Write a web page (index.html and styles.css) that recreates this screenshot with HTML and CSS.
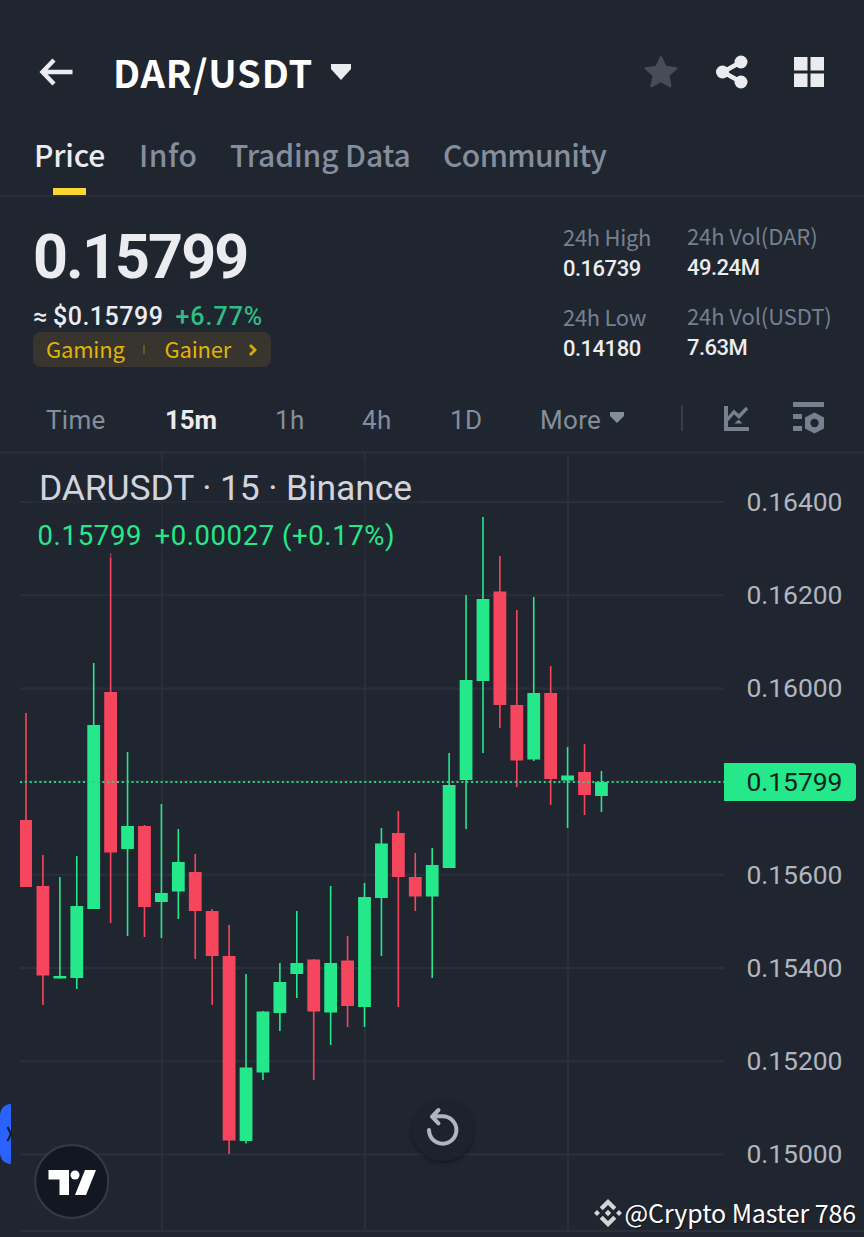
FILE: index.html
```html
<!DOCTYPE html>
<html lang="en">
<head>
    <meta charset="UTF-8">
    <meta name="viewport" content="width=device-width, initial-scale=1.0">
    <title>DAR/USDT</title>
    <link rel="stylesheet" href="styles.css">
</head>
<body>

    <header class="topbar">
        <svg class="back" width="34" height="28" viewBox="0 0 34 28">
            <path d="M33.500 14H4M15 2L3.500 14 15 26" fill="none" stroke="#eaecef" stroke-width="4.400"/>
        </svg>
        <h1>DAR/USDT</h1>
        <svg class="caret" width="22" height="16" viewBox="0 0 22 16">
            <path d="M1 0h20v5L11 16 1 5z" fill="#eaecef"/>
        </svg>
        <div class="actions">
            <svg width="34" height="34" viewBox="0 0 34 34">
                <path d="M17 2l4.600 9.800 10.800 1.400-7.900 7.400 2 10.700L17 26.200l-9.500 5.100 2-10.700-7.900-7.400 10.800-1.400z" fill="#474d57" stroke="#474d57" stroke-width="2" stroke-linejoin="round"/>
            </svg>
            <svg width="32" height="34" viewBox="0 0 32 34">
                <path d="M25 7L7 17l18 10" fill="none" stroke="#eaecef" stroke-width="4.600"/>
                <circle cx="25" cy="7" r="6.500" fill="#eaecef"/>
                <circle cx="6.500" cy="17" r="6.500" fill="#eaecef"/>
                <circle cx="25" cy="27" r="6.500" fill="#eaecef"/>
            </svg>
            <svg width="30" height="30" viewBox="0 0 30 30">
                <path d="M0 0h13.500v13.500H0zM16.500 0H30v13.500H16.500zM0 16.500h13.500V30H0zM16.500 16.500H30V30H16.500z" fill="#eaecef"/>
            </svg>
        </div>
    </header>

    <nav class="tabs">
        <a class="tab tab-price active">Price</a>
        <a class="tab tab-info">Info</a>
        <a class="tab tab-trading">Trading Data</a>
        <a class="tab tab-community">Community</a>
    </nav>

    <section class="summary">
        <div class="price">
            <div class="last">0.15799</div>
            <div class="fiat"><span class="approx">≈</span><span>$0.15799</span><span class="change">+6.77%</span></div>
            <div class="tags">
                <span>Gaming</span>
                <i class="tag-sep"></i>
                <span>Gainer</span>
                <svg width="10" height="14" viewBox="0 0 10 14">
                    <path d="M2 2l5 5-5 5" fill="none" stroke="#d9a90b" stroke-width="2.800"/>
                </svg>
            </div>
        </div>
        <div class="stats stats-range">
            <div class="label">24h High</div>
            <div class="value">0.16739</div>
            <div class="label">24h Low</div>
            <div class="value">0.14180</div>
        </div>
        <div class="stats stats-vol">
            <div class="label">24h Vol(DAR)</div>
            <div class="value">49.24M</div>
            <div class="label">24h Vol(USDT)</div>
            <div class="value">7.63M</div>
        </div>
    </section>

    <div class="intervals">
        <span class="int-time">Time</span>
        <span class="int-15m active">15m</span>
        <span class="int-1h">1h</span>
        <span class="int-4h">4h</span>
        <span class="int-1d">1D</span>
        <span class="int-more">More
            <svg width="14" height="11" viewBox="0 0 14 11"><path d="M0 0h14v4L7 11 0 4z" fill="#848e9c"/></svg>
        </span>
        <i class="divider"></i>
        <svg class="draw" width="25" height="25" viewBox="0 0 25 25">
            <path d="M2 0v23h23" fill="none" stroke="#76808f" stroke-width="4"/>
            <path d="M3 14l7-8 5 4.500 8-8.500" fill="none" stroke="#76808f" stroke-width="3.400"/>
            <path d="M10.500 17.500l4-4 4 4z" fill="#76808f"/>
        </svg>
        <svg class="settings" width="31" height="32" viewBox="0 0 31 32">
            <path d="M0 0h31v5H0zM0 12h9v5H0zM0 24h9v5H0z" fill="#76808f"/>
            <path fill-rule="evenodd" d="M21.500 10.500l9.500 5v11l-9.500 5-9.500-5v-11zM21.500 16.800a4.200 4.200 0 1 0 0 8.400 4.200 4.200 0 1 0 0-8.400z" fill="#76808f"/>
        </svg>
    </div>

    <main class="chart">
        <svg class="plot" width="864" height="783" viewBox="0 454 864 783">
            <g id="grid"></g>
            <g id="candles"></g>
            <path class="last-line" d="M20 782H724"/>
            <g id="axis"></g>
            <path class="last-tag" d="M724 763h128a4 4 0 0 1 4 4v30a4 4 0 0 1-4 4H724z"/>
            <text class="axis-text last-text" x="746.500" y="791" textLength="96">0.15799</text>
            <rect class="legend-bg" x="30" y="460" width="390" height="98"/>
            <text class="symbol" x="39" y="499.500" textLength="373">DARUSDT · 15 · Binance</text>
            <text class="ohlc" x="37.500" y="545" textLength="104">0.15799</text>
            <text class="ohlc" x="154.500" y="545" textLength="240">+0.00027 (+0.17%)</text>

            <!-- drawer handle -->
            <path d="M11 1104v60C4 1164 0 1159 0 1152v-36c0-7 4-12 11-12z" fill="#2962ff"/>
            <path d="M7.500 1127l3.500 7-3.500 7" fill="none" stroke="#131722" stroke-width="2"/>

            <!-- TradingView badge -->
            <circle cx="71.700" cy="1181.500" r="36.500" fill="#131722" stroke="#363a45" stroke-width="2"/>
            <path d="M48.500 1170H69v25h-9.500v-15.500h-11zM85 1170h11l-10 25H75z" fill="#fff"/>
            <circle cx="75" cy="1175" r="4.500" fill="#fff"/>

            <!-- reset button -->
            <circle class="reset" cx="443" cy="1130" r="31"/>
            <path d="M429 1130a13.700 13.700 0 1 0 13.700-13.700h-9M438.500 1110l-6.500 6.700 6.500 6.700" fill="none" stroke="#b2b5be" stroke-width="4" stroke-linecap="round" stroke-linejoin="round"/>
        </svg>
        <div class="watermark">
            <svg width="28" height="28" viewBox="0 0 28 28">
                <path d="M14 0l8.300 8.300-3 3L14 6l-5.300 5.300-3-3zM14 28l8.300-8.300-3-3L14 22l-5.300-5.300-3 3zM3 11l3 3-3 3-3-3zM25 11l3 3-3 3-3-3zM14 10.800l3.200 3.200-3.200 3.200-3.200-3.200z" fill="#d5d5d5"/>
            </svg>
            <span>@Crypto Master 786</span>
        </div>
    </main>

    <script>
        // direction, high, body top, body bottom, low
        const candles = [
            ["r", 713, 820, 887, 887], ["r", 855, 886, 975.5, 1005], ["g", 877, 976, 978.5, 978.5],
            ["g", 856, 906, 978, 989], ["g", 663, 725, 909, 909], ["r", 553, 692, 852.5, 923],
            ["g", 752, 826, 849, 936], ["r", 825, 826, 907, 937], ["g", 804, 893, 902, 938],
            ["g", 829, 862, 891.5, 919], ["r", 854, 872, 911, 959], ["r", 909, 911, 956, 1005],
            ["r", 925, 956, 1140.5, 1154], ["g", 974, 1067.5, 1141, 1143.5], ["g", 1011, 1011.5, 1072.5, 1080],
            ["g", 963, 982, 1013, 1031], ["g", 911, 963, 974, 998], ["r", 959, 959.5, 1011.5, 1080],
            ["g", 886, 963, 1012.5, 1045], ["r", 936, 960.5, 1006, 1027], ["g", 883, 897, 1007, 1027],
            ["g", 828, 843.5, 898, 956], ["r", 811, 833, 877, 1007], ["r", 853, 877, 896.5, 911],
            ["g", 848, 865, 896.5, 978], ["g", 753, 785, 868, 868], ["g", 595, 680, 780, 829],
            ["g", 517, 599, 681, 753], ["r", 556, 591.5, 705, 728], ["r", 610, 705, 760.5, 787],
            ["g", 597, 693, 759.5, 761], ["r", 666, 693, 779, 805], ["g", 747, 775.5, 780.5, 828],
            ["r", 744, 772, 795, 815], ["g", 771, 782, 796, 812]
        ];

        let bars = "";
        candles.forEach(([dir, high, top, bottom, low], i) => {
            const x = 26 + i * 16.925;
            const left = i === 0 ? 20 : x - 6.4;
            const width = i === 0 ? 12 : 12.8;
            bars += `<g class="${dir}"><rect x="${x - 0.8}" y="${high}" width="1.6" height="${low - high}"/>` +
                `<rect x="${left}" y="${top}" width="${width}" height="${bottom - top}"/></g>`;
        });
        document.getElementById("candles").innerHTML = bars;

        let lines = "";
        let labels = "";
        for (let i = 0; i < 8; i++) {
            const y = 502 + i * 93.2;
            lines += `<path d="M20 ${y}H724"/>`;
            if (i !== 3) {
                labels += `<text class="axis-text" x="746.5" y="${y + 9}" textLength="96">${(0.164 - i * 0.002).toFixed(5)}</text>`;
            }
        }
        [162, 365, 568].forEach(x => lines += `<path d="M${x} 454V1230"/>`);
        lines += `<path d="M20 1231H864"/>`;
        document.getElementById("grid").innerHTML = lines;
        document.getElementById("axis").innerHTML = labels;
    </script>

</body>
</html>
```
FILE: styles.css
```css
* {
    box-sizing: border-box;
}

body {
    margin: 0;
    height: 1237px;
    overflow: hidden;
    background-color: #202630;
    color: #eaecef;
    font-family: "Noto Sans CJK SC", "Noto Sans", sans-serif;
}

svg {
    display: block;
    flex: none;
}

.topbar {
    display: flex;
    align-items: center;
    height: 120px;
    padding: 24px 40px 0 39px;
}

h1 {
    margin: 0 0 0 40px;
    width: 201px;
    font-size: 38px;
    line-height: 48px;
    font-weight: 700;
    letter-spacing: 0.9px;
    color: #fff;
    white-space: nowrap;
}

.caret {
    margin-left: 16px;
}

.actions {
    display: flex;
    align-items: center;
    margin-left: auto;
}

.actions svg:nth-child(2) {
    margin: 0 46px 0 38px;
}

.tabs {
    display: flex;
    height: 77px;
    padding: 12px 34px 0;
    border-bottom: 2px solid #29303a;
    font-size: 30px;
    line-height: 44px;
    font-weight: 500;
    color: #848e9c;
}

.tab {
    white-space: nowrap;
}

.tab-price {
    width: 105px;
    letter-spacing: -0.2px;
}

.tab-info {
    width: 91px;
    letter-spacing: 0.5px;
}

.tab-trading {
    width: 213px;
    letter-spacing: -0.1px;
}

.tab-community {
    letter-spacing: -0.6px;
}

.tab.active {
    color: #eaecef;
}

.tab.active::after {
    content: "";
    display: block;
    width: 33px;
    height: 7px;
    margin: 12px 0 0 19px;
    background-color: #fcd535;
}

.summary {
    display: flex;
    height: 188px;
    padding: 24px 0 0 33px;
}

.price {
    width: 530px;
}

.last {
    height: 70px;
    font-family: Roboto, sans-serif;
    font-size: 61px;
    line-height: 72px;
    font-weight: 700;
    letter-spacing: -1.9px;
}

.fiat {
    display: flex;
    height: 41px;
    font-family: Roboto, sans-serif;
    font-size: 25px;
    line-height: 51px;
    font-weight: 500;
    letter-spacing: 0.5px;
}

.approx {
    width: 20px;
}

.change {
    margin-left: 12px;
    letter-spacing: 1px;
    color: #2ebd85;
}

.tags {
    display: flex;
    align-items: center;
    width: 238px;
    height: 35px;
    padding-left: 13px;
    border-radius: 8px;
    background-color: #37352d;
    color: #e3b208;
    font-size: 22px;
    line-height: 33px;
    letter-spacing: -0.2px;
}

.tags span {
    height: 35px;
}

.tag-sep {
    width: 2px;
    height: 9px;
    margin: 0 20px 0 18px;
    background-color: #665622;
}

.tags svg {
    margin-left: 17px;
}

.stats {
    font-size: 22px;
    line-height: 31px;
    white-space: nowrap;
}

.stats-range {
    width: 124px;
    padding-top: 1px;
}

.label {
    height: 31px;
    line-height: 28px;
    letter-spacing: -0.1px;
    color: #76808f;
}

.stats-range .label {
    letter-spacing: -0.3px;
}

.value {
    margin-bottom: 18px;
    font-family: Roboto, sans-serif;
    font-weight: 500;
    line-height: 32px;
    height: 31px;
    letter-spacing: -0.5px;
}

.intervals {
    display: flex;
    align-items: center;
    height: 69px;
    padding-left: 46px;
    border-bottom: 3px solid #272d38;
    font-family: Roboto, sans-serif;
    font-size: 26px;
    color: #848e9c;
    letter-spacing: 0.3px;
}

.intervals span {
    padding-top: 3px;
}

.intervals .active {
    color: #eaecef;
    font-weight: 700;
    letter-spacing: -0.2px;
}

.int-time {
    width: 119px;
}

.int-15m {
    width: 110px;
}

.int-1h {
    width: 87px;
}

.int-4h {
    width: 88px;
}

.int-1d {
    width: 90px;
}

.int-more {
    display: flex;
    align-items: center;
    gap: 9px;
    width: 141px;
}

.int-more svg {
    margin-bottom: 5px;
}

.divider {
    width: 2px;
    height: 26px;
    background-color: #363d48;
}

.draw {
    margin-left: 41px;
}

.settings {
    margin-left: 44px;
}

.chart {
    position: relative;
    height: 783px;
}

#grid path {
    fill: none;
    stroke: #2a303a;
    stroke-width: 2;
}

#candles .g {
    fill: #25e88b;
}

#candles .r {
    fill: #f6465d;
}

.last-line {
    stroke: #25d883;
    stroke-width: 2;
    stroke-dasharray: 2 2.85;
}

.last-tag {
    fill: #25e88b;
}

.axis-text {
    font-family: Roboto, sans-serif;
    font-size: 26.5px;
    fill: #b2b5be;
}

.last-text {
    fill: #10241f;
}

.legend-bg {
    fill: #202630;
    fill-opacity: 0.5;
}

.symbol {
    font-family: Roboto, sans-serif;
    font-size: 35.5px;
    fill: #d1d4dc;
}

.ohlc {
    font-family: Roboto, sans-serif;
    font-size: 27.5px;
    fill: #25e88b;
}

.reset {
    fill: #1e222d;
    filter: drop-shadow(0 2px 2px rgba(0, 0, 0, 0.4));
}

/* sits over the bottom right corner of the chart */
.watermark {
    position: absolute;
    right: 8px;
    bottom: 7px;
    display: flex;
    align-items: center;
    gap: 3px;
    font-size: 25px;
    line-height: 36px;
    letter-spacing: -0.1px;
    color: #fff;
    white-space: nowrap;
    text-shadow: 1px 1px 1px rgba(0, 0, 0, 0.5);
}

.watermark span {
    margin-top: -2px;
}
```
